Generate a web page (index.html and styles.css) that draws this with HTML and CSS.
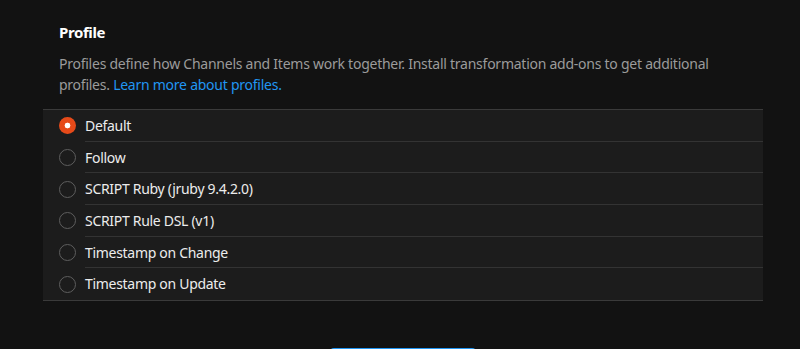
FILE: index.html
```html
<!DOCTYPE html>
<html>
<head>
<meta charset="utf-8">
<link rel="stylesheet" href="styles.css">
</head>
<body>
<div class="page">
  <div class="block-title">Profile</div>
  <div class="block-text">Profiles define how Channels and Items work together. Install transformation add-ons to get additional profiles. <a class="link" href="#">Learn more about profiles.</a></div>
  <ul class="list">
    <li class="item"><span class="radio checked"></span><span class="label">Default</span></li>
    <li class="item"><span class="radio"></span><span class="label">Follow</span></li>
    <li class="item"><span class="radio"></span><span class="label">SCRIPT Ruby (jruby 9.4.2.0)</span></li>
    <li class="item"><span class="radio"></span><span class="label">SCRIPT Rule DSL (v1)</span></li>
    <li class="item"><span class="radio"></span><span class="label">Timestamp on Change</span></li>
    <li class="item"><span class="radio"></span><span class="label">Timestamp on Update</span></li>
  </ul>
  <div class="actions"><span class="button"></span></div>
</div>
</body>
</html>
```
FILE: styles.css
```css
html, body {
  margin: 0;
  padding: 0;
  background: #121212;
  height: 100%;
  overflow: hidden;
}
body {
  font-family: "Noto Sans", "DejaVu Sans", sans-serif;
  color: #ffffff;
}
.page {
  width: 720px;
  padding: 22px 0 0 43px;
}
.block-title {
  padding-left: 16px;
  font-size: 15px;
  font-weight: 700;
  line-height: 20px;
  letter-spacing: -0.4px;
  color: #ffffff;
}
.block-text {
  padding: 11px 16px 0 16px;
  font-size: 14px;
  line-height: 21px;
  letter-spacing: -0.25px;
  color: #9b9b9b;
}
.link {
  color: #2196f3;
  text-decoration: none;
}
.list {
  list-style: none;
  margin: 14px 0 0 0;
  padding: 0;
  background: #1c1c1c;
  border-top: 1px solid #3a3a3a;
  border-bottom: 1px solid #3a3a3a;
}
.item {
  display: flex;
  align-items: center;
  height: 31.67px;
  padding-left: 16px;
}
.radio {
  flex: none;
  box-sizing: border-box;
  width: 17px;
  height: 17px;
  border-radius: 50%;
  border: 1.5px solid #5e5e5e;
  margin-right: 9px;
}
.radio.checked {
  border: none;
  background: radial-gradient(circle, #ffffff 0 2.6px, #e64a19 3.2px);
}
.label {
  flex: 1;
  height: 31.67px;
  line-height: 31px;
  font-size: 14px;
  letter-spacing: -0.3px;
  color: #ececec;
  border-bottom: 1px solid #333333;
  box-sizing: border-box;
}
.item:last-child .label {
  border-bottom: none;
}
.actions {
  display: flex;
  justify-content: center;
  padding-top: 47px;
}
.button {
  display: block;
  width: 146px;
  height: 32px;
  background: #2196f3;
  border-radius: 4px;
}
```
